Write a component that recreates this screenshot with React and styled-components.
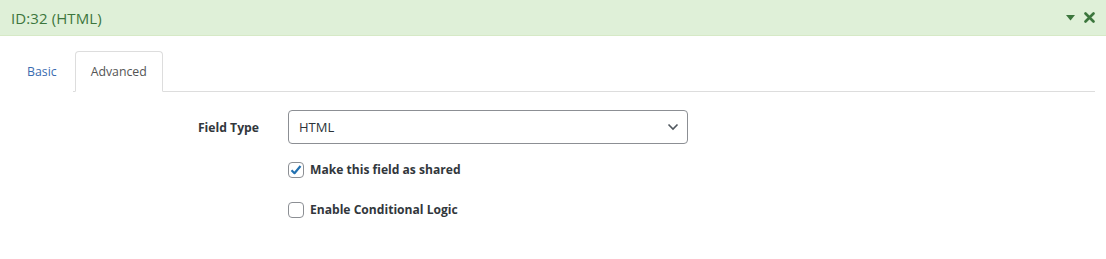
import React from 'react';
import styled, { createGlobalStyle } from 'styled-components';

const GlobalStyle = createGlobalStyle`
  body {
    margin: 0;
    background: #fff;
    font-family: "Open Sans", "Noto Sans", sans-serif;
    color: #32373c;
  }
`;

const Panel = styled.div`
  width: 1106px;
  height: 259px;
  background: #fff;
`;

const Header = styled.div`
  height: 35px;
  display: flex;
  align-items: center;
  justify-content: space-between;
  padding: 0 11px;
  background-color: #dff0d8;
  border-bottom: 1px solid #d6e9c6;
  color: #3c763d;
`;

const Title = styled.span`
  font-size: 15px;
  letter-spacing: 0.1px;
`;

const Tools = styled.div`
  display: flex;
  align-items: center;
  gap: 9px;
`;

const Body = styled.div`
  padding: 15px 11px;
`;

const TabBar = styled.div`
  display: flex;
  border-bottom: 1px solid #ddd;
  height: 40px;
`;

const Tab = styled.div`
  padding: 0 15px;
  margin-right: 2px;
  margin-bottom: -1px;
  display: flex;
  align-items: center;
  font-size: 12.3px;
  border: 1px solid ${p => (p.active ? '#ddd' : 'transparent')};
  border-bottom-color: ${p => (p.active ? '#fff' : 'transparent')};
  border-radius: 4px 4px 0 0;
  background: #fff;
  color: ${p => (p.active ? '#555' : '#3a6cb0')};
`;

const Row = styled.div`
  display: grid;
  grid-template-columns: 262px 415px;
  align-items: center;
  margin-top: ${p => p.top}px;
`;

const Label = styled.label`
  text-align: right;
  padding-right: 14px;
  font-size: 12.2px;
  font-weight: 700;
  color: #32373c;
`;

const Control = styled.div`
  padding-left: 15px;
`;

const SelectBox = styled.div`
  width: 400px;
  height: 34px;
  box-sizing: border-box;
  border: 1px solid #8c8f94;
  border-radius: 4px;
  display: flex;
  align-items: center;
  justify-content: space-between;
  padding: 0 8px 0 10px;
  font-size: 13px;
  color: #2c3338;
`;

const Check = styled.label`
  display: flex;
  align-items: center;
  gap: 6px;
  font-size: 12.1px;
  font-weight: 700;
  color: #32373c;
`;

const Box = styled.span`
  width: 16px;
  height: 16px;
  box-sizing: border-box;
  border: 1px solid #8c8f94;
  border-radius: 4px;
  display: flex;
  align-items: center;
  justify-content: center;
  background: #fff;
`;

const Checkbox = ({ checked }) => (
  <Box>
    {checked && (
      <svg width="14" height="14" viewBox="0 0 14 14">
        <path d="M2.5 7.2l3 3 6-7.2" stroke="#2271b1" strokeWidth="2.2" fill="none" strokeLinejoin="round" />
      </svg>
    )}
  </Box>
);

export default function App() {
  return (
    <>
      <GlobalStyle />
      <Panel>
        <Header>
          <Title>ID:32 (HTML)</Title>
          <Tools>
            <svg width="9" height="6" viewBox="0 0 9 6">
              <path d="M0 0h9L4.5 5.5z" fill="#3c763d" />
            </svg>
            <svg width="11" height="11" viewBox="0 0 11 11">
              <path d="M1.5 1.5l8 8M9.5 1.5l-8 8" stroke="#3c763d" strokeWidth="2.6" strokeLinecap="round" />
            </svg>
          </Tools>
        </Header>
        <Body>
          <TabBar>
            <Tab>Basic</Tab>
            <Tab active>Advanced</Tab>
          </TabBar>
          <Row top={18}>
            <Label>Field Type</Label>
            <Control>
              <SelectBox>
                <span>HTML</span>
                <svg width="12" height="8" viewBox="0 0 12 8">
                  <path d="M1.5 1.5l4.5 4.5 4.5-4.5" stroke="#50575e" strokeWidth="1.6" fill="none" />
                </svg>
              </SelectBox>
            </Control>
          </Row>
          <Row top={17}>
            <span />
            <Control>
              <Check>
                <Checkbox checked />
                Make this field as shared
              </Check>
            </Control>
          </Row>
          <Row top={23}>
            <span />
            <Control>
              <Check>
                <Checkbox />
                Enable Conditional Logic
              </Check>
            </Control>
          </Row>
        </Body>
      </Panel>
    </>
  );
}
